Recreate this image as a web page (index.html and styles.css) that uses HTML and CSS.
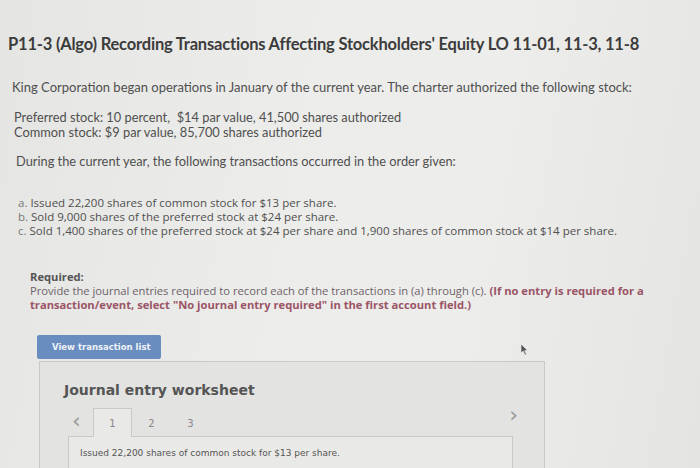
FILE: index.html
```html
<!DOCTYPE html>
<html>
<head>
<meta charset="utf-8">
<link rel="stylesheet" href="styles.css">
</head>
<body>
<div class="page">
  <h1 class="title">P11-3 (Algo) Recording Transactions Affecting Stockholders' Equity LO 11-01, 11-3, 11-8</h1>
  <p class="intro">King Corporation began operations in January of the current year. The charter authorized the following stock:</p>
  <div class="stock">
    <div>Preferred stock: 10 percent, &nbsp;$14 par value, 41,500 shares authorized</div>
    <div>Common stock: $9 par value, 85,700 shares authorized</div>
  </div>
  <p class="during">During the current year, the following transactions occurred in the order given:</p>
  <ol class="trans">
    <li><span class="lbl">a.</span> Issued 22,200 shares of common stock for $13 per share.</li>
    <li><span class="lbl">b.</span> Sold 9,000 shares of the preferred stock at $24 per share.</li>
    <li><span class="lbl">c.</span> Sold 1,400 shares of the preferred stock at $24 per share and 1,900 shares of common stock at $14 per share.</li>
  </ol>
  <div class="required">
    <div class="req-head">Required:</div>
    <div class="req-body">Provide the journal entries required to record each of the transactions in (a) through (c). <b class="note">(If no entry is required for a transaction/event, select "No journal entry required" in the first account field.)</b></div>
  </div>
  <div class="btn-row">
    <button class="btn">View transaction list</button>
    <svg class="cursor" width="9" height="13" viewBox="0 0 9 13"><path d="M1 1 L1 10 L3.2 8 L5 12 L6.4 11.4 L4.7 7.6 L7.6 7.4 Z" fill="#555" stroke="#eee" stroke-width="0.6"/></svg>
  </div>
  <div class="worksheet">
    <div class="ws-title">Journal entry worksheet</div>
    <div class="tabs">
      <span class="arrow">&lsaquo;</span>
      <span class="tab active">1</span>
      <span class="tab">2</span>
      <span class="tab">3</span>
      <span class="spacer"></span>
      <span class="arrow right">&rsaquo;</span>
    </div>
    <div class="panel">Issued 22,200 shares of common stock for $13 per share.</div>
  </div>
</div>
</body>
</html>
```
FILE: styles.css
```css
html, body {
  margin: 0;
  padding: 0;
}
body {
  width: 700px;
  height: 468px;
  overflow: hidden;
  background: linear-gradient(100deg, #e5e5e3 0%, #ececea 40%, #ededeb 65%, #e4e4e2 100%);
  font-family: Lato, "Open Sans", sans-serif;
  color: #4f4f4f;
}
.page {
  padding: 34px 0 0 8px;
}
.title {
  margin: 0;
  font-size: 16.5px;
  font-weight: 700;
  color: #3c3c3c;
  letter-spacing: -0.2px;
  line-height: 20px;
}
.intro {
  margin: 25px 0 0 4px;
  font-size: 13px;
  line-height: 16px;
}
.stock {
  margin: 15px 0 0 6px;
  font-size: 12.8px;
  line-height: 15px;
}
.during {
  margin: 13px 0 0 8px;
  font-size: 12.8px;
  line-height: 16px;
}
.trans {
  list-style: none;
  margin: 27px 0 0 10px;
  padding: 0;
  font-size: 11.5px;
  line-height: 14px;
  font-family: "Open Sans", sans-serif;
}
.lbl {
  color: #777;
}
.required {
  margin: 32px 0 0 22px;
  font-family: "Open Sans", sans-serif;
  font-size: 11.2px;
  line-height: 14px;
  color: #6d6269;
}
.req-head {
  font-weight: 700;
  color: #555;
}
.note {
  color: #9a5566;
}
.btn-row {
  display: flex;
  align-items: flex-start;
  margin: 23px 0 0 29px;
}
.btn {
  width: 124px;
  height: 24px;
  border: none;
  border-radius: 2px;
  background: #6a8dbf;
  color: #eef2f8;
  font-family: "DejaVu Sans", sans-serif;
  font-weight: 700;
  font-size: 8.5px;
  text-align: left;
  padding: 0 0 0 15px;
}
.cursor {
  margin: 8px 0 0 359px;
}
.worksheet {
  margin: 2px 0 0 31px;
  width: 506px;
  height: 120px;
  border: 1px solid #c9c9c7;
  background: #e3e3e1;
  padding: 0 0 0 24px;
  box-sizing: border-box;
}
.ws-title {
  margin-top: 20px;
  font-family: "DejaVu Sans", sans-serif;
  font-weight: 700;
  font-size: 14px;
  color: #555;
}
.tabs {
  display: flex;
  align-items: flex-end;
  margin: 8px 0 0 8px;
  height: 30px;
  width: 446px;
  font-family: "DejaVu Sans", sans-serif;
  font-size: 10px;
  color: #888;
}
.arrow {
  font-size: 22px;
  color: #999;
  width: 21px;
  line-height: 22px;
  align-self: center;
}
.arrow.right {
  width: auto;
  align-self: flex-start;
  margin-top: -2px;
}
.tab {
  width: 39px;
  height: 26px;
  display: flex;
  align-items: center;
  justify-content: center;
  box-sizing: border-box;
}
.tab.active {
  border: 1px solid #c9c9c7;
  border-bottom: none;
  background: #e9e9e7;
  height: 29px;
  margin-bottom: -1px;
  position: relative;
  z-index: 1;
}
.spacer {
  flex: 1;
}
.panel {
  width: 445px;
  height: 40px;
  border: 1px solid #c9c9c7;
  background: #e9e9e7;
  margin-left: 4px;
  box-sizing: border-box;
  font-family: "DejaVu Sans", sans-serif;
  font-size: 9px;
  color: #555;
  padding: 11px 0 0 11px;
}
```
